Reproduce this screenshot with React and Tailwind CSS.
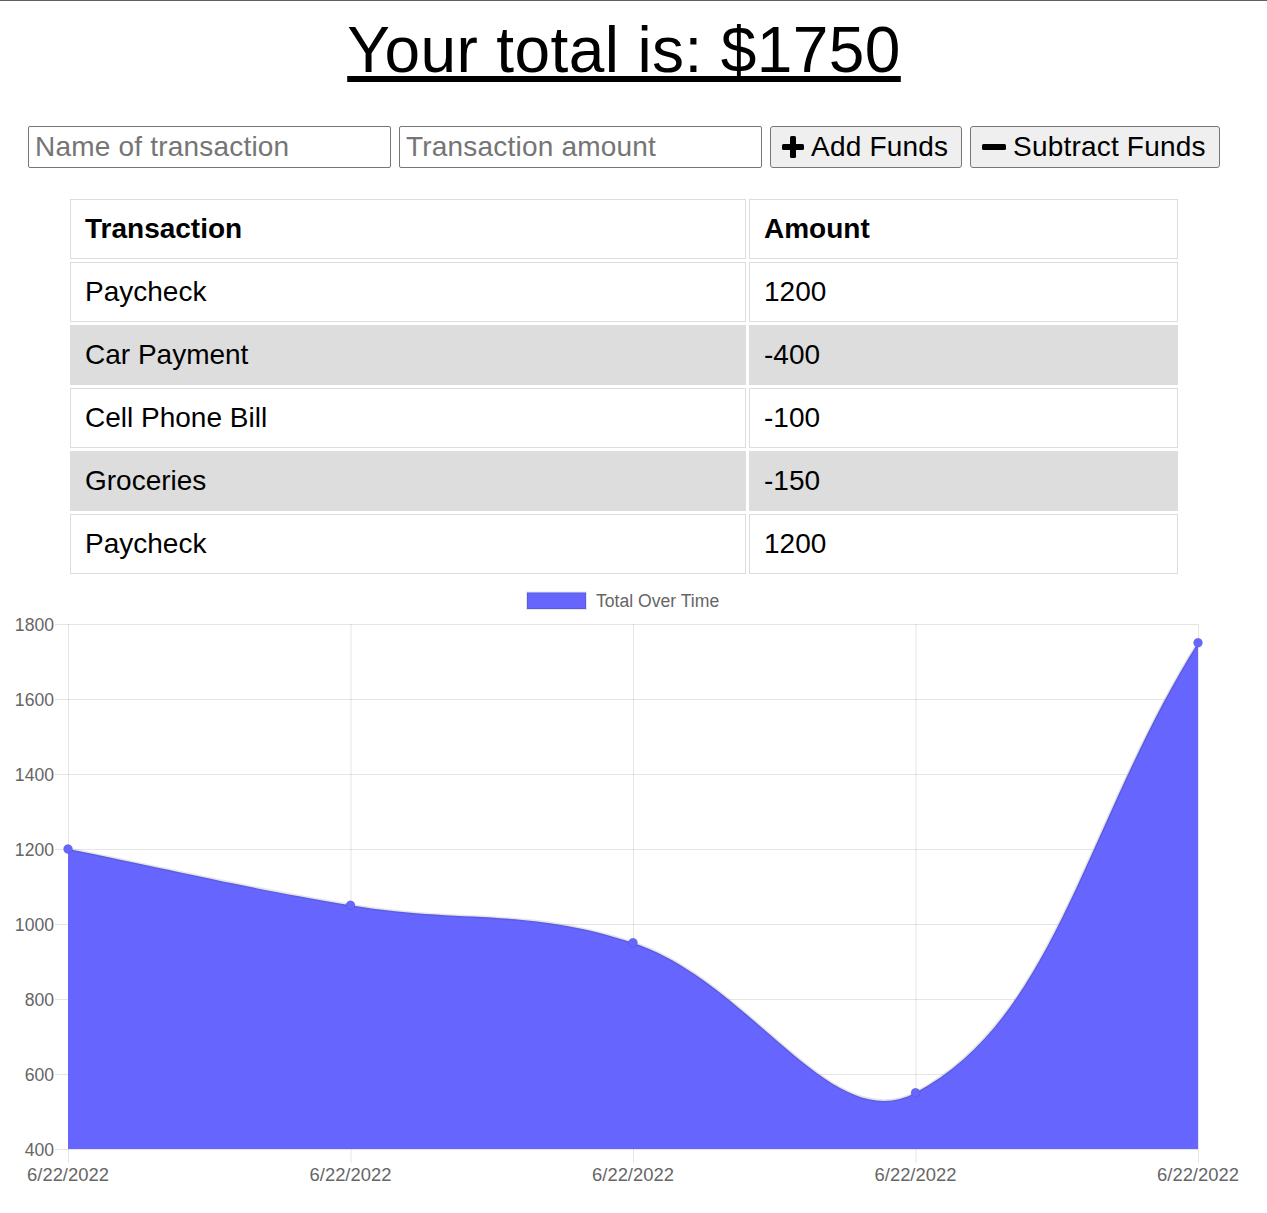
import React from "react";

const rows = [
  { name: "Paycheck", amount: "1200" },
  { name: "Car Payment", amount: "-400" },
  { name: "Cell Phone Bill", amount: "-100" },
  { name: "Groceries", amount: "-150" },
  { name: "Paycheck", amount: "1200" },
];

// chart geometry (page pixels)
const LEFT = 68;
const RIGHT = 1198;
const TOP = 624;
const BOTTOM = 1149;
const MIN = 400;
const MAX = 1800;
const values = [1200, 1050, 950, 550, 1750];

const yFor = (v) => BOTTOM - ((v - MIN) / (MAX - MIN)) * (BOTTOM - TOP);
const xFor = (i) => LEFT + (i * (RIGHT - LEFT)) / (values.length - 1);

// same spline as chart.js (tension 0.4)
const splineCurve = (prev, cur, next, t) => {
  const d01 = Math.hypot(cur.x - prev.x, cur.y - prev.y);
  const d12 = Math.hypot(next.x - cur.x, next.y - cur.y);
  let s01 = d01 / (d01 + d12);
  let s12 = d12 / (d01 + d12);
  if (isNaN(s01)) s01 = 0;
  if (isNaN(s12)) s12 = 0;
  const fa = t * s01;
  const fb = t * s12;
  return {
    prev: { x: cur.x - fa * (next.x - prev.x), y: cur.y - fa * (next.y - prev.y) },
    next: { x: cur.x + fb * (next.x - prev.x), y: cur.y + fb * (next.y - prev.y) },
  };
};

const clampY = (y) => Math.min(Math.max(y, TOP), BOTTOM);

const buildPath = () => {
  const pts = values.map((v, i) => ({ x: xFor(i), y: yFor(v) }));
  const cps = pts.map((p, i) => {
    const c = splineCurve(pts[i > 0 ? i - 1 : 0], p, pts[i < pts.length - 1 ? i + 1 : i], 0.4);
    c.prev.y = clampY(c.prev.y);
    c.next.y = clampY(c.next.y);
    return c;
  });
  let d = `M ${pts[0].x} ${pts[0].y}`;
  for (let i = 1; i < pts.length; i++) {
    const a = cps[i - 1].next;
    const b = cps[i].prev;
    d += ` C ${a.x} ${a.y} ${b.x} ${b.y} ${pts[i].x} ${pts[i].y}`;
  }
  return { d, pts };
};

const PlusIcon = () => (
  <svg width="22" height="22" viewBox="0 0 22 22">
    <rect x="8" y="0" width="6" height="22" rx="1.5" fill="#000" />
    <rect x="0" y="8" width="22" height="6" rx="1.5" fill="#000" />
  </svg>
);

const MinusIcon = () => (
  <svg width="24" height="22" viewBox="0 0 24 22">
    <rect x="0" y="8" width="24" height="6" rx="1.5" fill="#000" />
  </svg>
);

const chartFont = "'Liberation Sans', Arial, sans-serif";

const Chart = () => {
  const { d, pts } = buildPath();
  const ticks = [1800, 1600, 1400, 1200, 1000, 800, 600, 400];
  const grid = "rgba(0,0,0,0.1)";
  return (
    <svg width="1248" height="633" viewBox="0 580 1248 633" className="block">
      {/* legend */}
      <rect x="527" y="592.5" width="59" height="16.5" fill="#6666ff" stroke={grid} strokeWidth="2" />
      <text x="596" y="607" fontSize="17.6" fill="#666" fontFamily={chartFont}>
        Total Over Time
      </text>

      {/* horizontal grid + y labels */}
      {ticks.map((t) => (
        <g key={t}>
          <line x1={LEFT - 13} x2={RIGHT} y1={yFor(t) + 0.5} y2={yFor(t) + 0.5} stroke={grid} strokeWidth="1" />
          <text x="54" y={yFor(t) + 6.5} textAnchor="end" fontSize="17.6" fill="#666" fontFamily={chartFont}>
            {t}
          </text>
        </g>
      ))}

      {/* vertical grid + x labels */}
      {values.map((_, i) => (
        <g key={i}>
          <line x1={xFor(i) + 0.5} x2={xFor(i) + 0.5} y1={TOP} y2={BOTTOM + 14} stroke={grid} strokeWidth="1" />
          <text x={xFor(i)} y="1181" textAnchor="middle" fontSize="18.4" fill="#666" fontFamily={chartFont}>
            6/22/2022
          </text>
        </g>
      ))}

      {/* area */}
      <path d={`${d} L ${RIGHT} ${BOTTOM} L ${LEFT} ${BOTTOM} Z`} fill="#6666ff" />
      <path d={d} fill="none" stroke={grid} strokeWidth="3" />
      {pts.map((p, i) => (
        <circle key={i} cx={p.x} cy={p.y} r="4.5" fill="#6666ff" stroke={grid} strokeWidth="1" />
      ))}
    </svg>
  );
};

export default function App() {
  return (
    <div className="w-full border-t border-[#5f5f5f] bg-white font-['Liberation_Sans',Arial,sans-serif] text-black">
      <div className="w-[1248px]">
        <h1 className="pt-[13px] text-center text-[64px] leading-[72px] tracking-[0.4px] underline">
          Your total is: $1750
        </h1>

        <div className="mt-[40px] flex justify-center gap-2">
          <input
            type="text"
            placeholder="Name of transaction"
            className="h-[42px] w-[363px] rounded-[2px] border border-[#767676] px-[6px] text-[28px] tracking-[0.2px] placeholder:text-[#757575] outline-none"
          />
          <input
            type="number"
            placeholder="Transaction amount"
            className="h-[42px] w-[363px] rounded-[2px] border border-[#767676] px-[6px] text-[28px] tracking-[0.2px] placeholder:text-[#757575] outline-none"
          />
          <button className="flex h-[42px] w-[192px] items-center gap-[7px] rounded-[3px] border border-[#767676] bg-[#efefef] pl-[11px] text-[28px] tracking-[0.2px]">
            <PlusIcon />
            Add Funds
          </button>
          <button className="flex h-[42px] w-[250px] items-center gap-[7px] rounded-[3px] border border-[#767676] bg-[#efefef] pl-[11px] text-[28px] tracking-[0.2px]">
            <MinusIcon />
            Subtract Funds
          </button>
        </div>

        <div className="mt-[31px] flex justify-center">
          <div className="grid grid-cols-[676px_429px] gap-[3px] text-[28px]">
            <div className="flex h-[60px] items-center border border-[#dddddd] px-[14px] font-bold">Transaction</div>
            <div className="flex h-[60px] items-center border border-[#dddddd] px-[14px] font-bold">Amount</div>
            {rows.map((r, i) => (
              <React.Fragment key={i}>
                <div
                  className={`flex h-[60px] items-center border border-[#dddddd] px-[14px] ${
                    i % 2 === 1 ? "bg-[#dddddd]" : "bg-white"
                  }`}
                >
                  {r.name}
                </div>
                <div
                  className={`flex h-[60px] items-center border border-[#dddddd] px-[14px] ${
                    i % 2 === 1 ? "bg-[#dddddd]" : "bg-white"
                  }`}
                >
                  {r.amount}
                </div>
              </React.Fragment>
            ))}
          </div>
        </div>

        <div className="mt-[6px]">
          <Chart />
        </div>
      </div>
    </div>
  );
}
